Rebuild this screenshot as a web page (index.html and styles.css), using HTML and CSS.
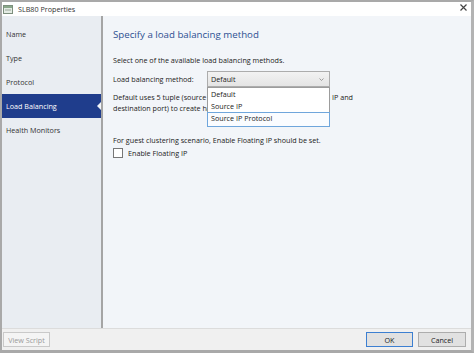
FILE: index.html
```html
<!DOCTYPE html>
<html lang="en">
<head>
    <meta charset="UTF-8">
    <meta name="viewport" content="width=device-width, initial-scale=1.0">
    <title>SLB80 Properties</title>
    <link rel="stylesheet" href="styles.css">
</head>
<body>
    <div class="window">
        <div class="titlebar">
            <svg class="app-icon" width="10" height="9" viewBox="0 0 10 9">
                <rect x="0.5" y="0.5" width="9" height="8" fill="#e4ece4" stroke="#7d8f7d"/>
                <rect x="1" y="1" width="8" height="2" fill="#8aa88a"/>
                <line x1="2" y1="5" x2="8" y2="5" stroke="#9aa59a"/>
            </svg>
            <span class="title">SLB80 Properties</span>
            <svg class="close" width="7" height="7" viewBox="0 0 7 7">
                <path d="M0.5 0.5 L6.5 6.5 M6.5 0.5 L0.5 6.5" stroke="#444" stroke-width="1.2"/>
            </svg>
        </div>

        <div class="main">
            <ul class="nav">
                <li>Name</li>
                <li>Type</li>
                <li>Protocol</li>
                <li class="active">Load Balancing</li>
                <li>Health Monitors</li>
            </ul>

            <div class="content">
                <h1>Specify a load balancing method</h1>
                <p class="intro">Select one of the available load balancing methods.</p>

                <div class="method-row">
                    <span class="label">Load balancing method:</span>
                    <div class="select">
                        <span>Default</span>
                        <svg class="chevron" width="5" height="3" viewBox="0 0 5 3">
                            <path d="M0.5 0.5 L2.5 2.5 L4.5 0.5" fill="none" stroke="#888" stroke-width="0.8"/>
                        </svg>
                        <ul class="options">
                            <li>Default</li>
                            <li>Source IP</li>
                            <li class="hover">Source IP Protocol</li>
                        </ul>
                    </div>
                </div>

                <p class="desc">Default uses 5 tuple (source IP, source port, protocol, destination IP and<br>destination port) to create hash.</p>

                <p class="note">For guest clustering scenario, Enable Floating IP should be set.</p>

                <label class="check">
                    <span class="box"></span>
                    Enable Floating IP
                </label>
            </div>
        </div>

        <div class="footer">
            <button class="btn disabled">View Script</button>
            <div class="actions">
                <button class="btn primary">OK</button>
                <button class="btn">Cancel</button>
            </div>
        </div>
    </div>
</body>
</html>
```

FILE: styles.css
```css
body {
    margin: 0;
    font-family: "Open Sans", "Noto Sans", sans-serif;
    font-size: 7.2px;
    color: #222;
    background: #fff;
}
.window {
    width: 474px;
    height: 353px;
    box-sizing: border-box;
    display: flex;
    flex-direction: column;
    border-top: 2px solid #a9a9a9;
    border-left: 2px solid #a9a9a9;
    border-right: 3px solid #b3b3b3;
    border-bottom: 3px solid #a9a9a9;
    background: #f0f0f0;
}
.titlebar {
    height: 14px;
    display: flex;
    align-items: center;
    background: #fff;
    padding: 0 4px 0 1px;
}
.app-icon {
    margin-right: 5px;
}
.title {
    flex: 1;
    color: #333;
}
.close {
    margin-top: -4px;
}
.main {
    flex: 1;
    display: flex;
    border-bottom: 1px solid #dcdcdc;
}
.nav {
    list-style: none;
    margin: 0;
    padding: 6px 0 0;
    width: 99px;
    background: #e9edf2;
    border-right: 2px solid #a5a5a5;
}
.nav li {
    height: 24px;
    line-height: 24px;
    padding-left: 4px;
    color: #333;
    position: relative;
}
.nav li.active {
    background: #1f3d8c;
    color: #fff;
}
.nav li.active::after {
    content: "";
    position: absolute;
    right: 0;
    top: 8px;
    border-style: solid;
    border-width: 4px 4px 4px 0;
    border-color: transparent #f2f5f9 transparent transparent;
}
.content {
    flex: 1;
    background: #f2f5f9;
    padding: 12px 10px 0;
}
h1 {
    margin: 0;
    font-size: 9.7px;
    font-weight: normal;
    line-height: 13px;
    color: #2d4f92;
}
.intro {
    margin: 14px 0 0;
    line-height: 10px;
}
.method-row {
    display: flex;
    align-items: center;
    margin-top: 6px;
}
.label {
    width: 94px;
}
.select {
    position: relative;
    width: 123px;
    height: 16px;
    box-sizing: border-box;
    border: 1px solid #acacac;
    background: linear-gradient(#f2f2f2, #e4e4e4);
    display: flex;
    align-items: center;
    justify-content: space-between;
    padding: 0 5px 0 3px;
}
.options {
    position: absolute;
    left: -1px;
    top: 15px;
    width: 123px;
    margin: 0;
    padding: 0;
    list-style: none;
    background: #fff;
    border: 1px solid #9c9c9c;
    box-sizing: border-box;
}
.options li {
    height: 12px;
    line-height: 12px;
    padding-left: 3px;
}
.options li.hover {
    height: 13px;
    line-height: 11px;
    border: 1px solid #6fa6dc;
    margin: 0 -1px -1px;
    padding-left: 3px;
    background: #fafcff;
}
.desc {
    margin: 5px 0 0;
    line-height: 11px;
}
.note {
    margin: 21px 0 0;
    line-height: 10px;
}
.check {
    display: flex;
    align-items: center;
    gap: 5px;
    margin-top: 3px;
}
.box {
    width: 8px;
    height: 8px;
    border: 1px solid #777;
    background: #fff;
}
.footer {
    height: 21px;
    display: flex;
    align-items: center;
    justify-content: space-between;
    padding: 0 5px 0 1px;
}
.actions {
    display: flex;
    gap: 5px;
}
.btn {
    font-family: inherit;
    font-size: 7.2px;
    height: 15px;
    width: 48px;
    padding: 0;
    border: 1px solid #adadad;
    background: #e1e1e1;
    color: #222;
}
.btn.primary {
    width: 47px;
    border-color: #3c7fd1;
}
.btn.disabled {
    width: 47px;
    background: #f4f4f4;
    border-color: #c9c9c9;
    color: #9a9a9a;
}
```
